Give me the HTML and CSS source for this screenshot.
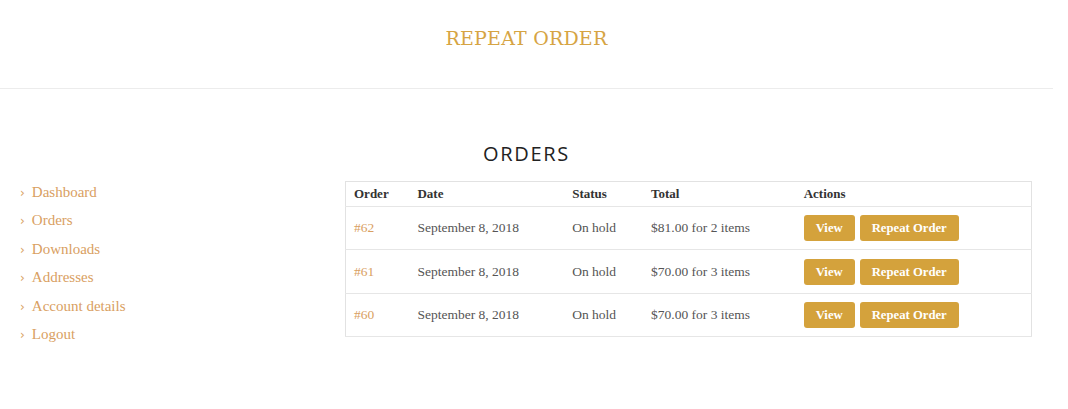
FILE: index.html
```html
<!DOCTYPE html>
<html>
<head>
<meta charset="utf-8">
<link rel="stylesheet" href="styles.css">
</head>
<body>
<div class="page">
  <header class="site-header">
    <h1 class="page-title">REPEAT ORDER</h1>
  </header>
  <main class="content">
    <nav class="account-nav">
      <a class="nav-link" href="#">Dashboard</a>
      <a class="nav-link" href="#">Orders</a>
      <a class="nav-link" href="#">Downloads</a>
      <a class="nav-link" href="#">Addresses</a>
      <a class="nav-link" href="#">Account details</a>
      <a class="nav-link" href="#">Logout</a>
    </nav>
    <section class="orders">
      <h2 class="orders-title">ORDERS</h2>
      <table class="orders-table">
        <colgroup>
          <col class="c-order"><col class="c-date"><col class="c-status"><col class="c-total"><col class="c-actions">
        </colgroup>
        <thead>
          <tr><th>Order</th><th>Date</th><th>Status</th><th>Total</th><th>Actions</th></tr>
        </thead>
        <tbody>
          <tr>
            <td><a class="order-link" href="#">#62</a></td>
            <td>September 8, 2018</td>
            <td>On hold</td>
            <td>$81.00 for 2 items</td>
            <td class="actions"><a class="btn btn-view" href="#">View</a><a class="btn btn-repeat" href="#">Repeat Order</a></td>
          </tr>
          <tr>
            <td><a class="order-link" href="#">#61</a></td>
            <td>September 8, 2018</td>
            <td>On hold</td>
            <td>$70.00 for 3 items</td>
            <td class="actions"><a class="btn btn-view" href="#">View</a><a class="btn btn-repeat" href="#">Repeat Order</a></td>
          </tr>
          <tr>
            <td><a class="order-link" href="#">#60</a></td>
            <td>September 8, 2018</td>
            <td>On hold</td>
            <td>$70.00 for 3 items</td>
            <td class="actions"><a class="btn btn-view" href="#">View</a><a class="btn btn-repeat" href="#">Repeat Order</a></td>
          </tr>
        </tbody>
      </table>
    </section>
  </main>
</div>
</body>
</html>
```
FILE: styles.css
```css
html, body {
  margin: 0;
  padding: 0;
  background: #ffffff;
}
body {
  font-family: "Liberation Serif", serif;
  color: #444;
}
.page {
  width: 1053px;
}
.site-header {
  height: 88px;
  border-bottom: 1px solid #ececec;
  display: flex;
  align-items: center;
  justify-content: center;
}
.page-title {
  margin: 0 0 12px 0;
  font-family: "DejaVu Serif", serif;
  font-weight: normal;
  font-size: 19px;
  letter-spacing: 0.2px;
  color: #d6a443;
}
.content {
  display: flex;
  padding-top: 51px;
}
.account-nav {
  width: 345px;
  padding-left: 20px;
  box-sizing: border-box;
  padding-top: 44px;
  display: flex;
  flex-direction: column;
}
.nav-link {
  font-family: "Liberation Serif", serif;
  font-size: 15px;
  color: #d9a062;
  text-decoration: none;
  height: 28.4px;
  line-height: 17px;
}
.nav-link::before {
  content: "›";
  font-family: "DejaVu Sans", sans-serif;
  font-size: 12px;
  margin-right: 7px;
  color: #d9a062;
}
.orders {
  width: 687px;
}
.orders-title {
  margin: 0 0 14px -345px;
  width: 1053px;
  text-align: center;
  font-family: "Open Sans", sans-serif;
  font-weight: normal;
  font-size: 20px;
  letter-spacing: 1.7px;
  color: #222;
  line-height: 27px;
}
.orders-table {
  width: 687px;
  border-collapse: collapse;
  border: 1px solid #e2e2e2;
  font-size: 13.5px;
  color: #444;
}
.c-order { width: 64px; }
.c-date { width: 155px; }
.c-status { width: 79px; }
.c-total { width: 153px; }
.c-actions { width: 236px; }
.orders-table th {
  text-align: left;
  font-weight: bold;
  font-size: 13px;
  color: #333;
  height: 24px;
  padding: 0 8px;
  border-bottom: 1px solid #e6e6e6;
}
.orders-table td {
  height: 42.4px;
  padding: 0 8px;
  border-bottom: 1px solid #e6e6e6;
  color: #555;
}
.order-link {
  color: #d9a062;
  text-decoration: none;
}
.actions {
  white-space: nowrap;
}
.btn {
  display: inline-block;
  background: #d4a23c;
  color: #fff;
  text-decoration: none;
  font-weight: bold;
  font-size: 12.7px;
  height: 26px;
  line-height: 26px;
  border-radius: 3px;
  text-align: center;
  vertical-align: middle;
}
.btn-view {
  width: 51px;
  margin-right: 5px;
}
.btn-repeat {
  width: 99px;
}
```
